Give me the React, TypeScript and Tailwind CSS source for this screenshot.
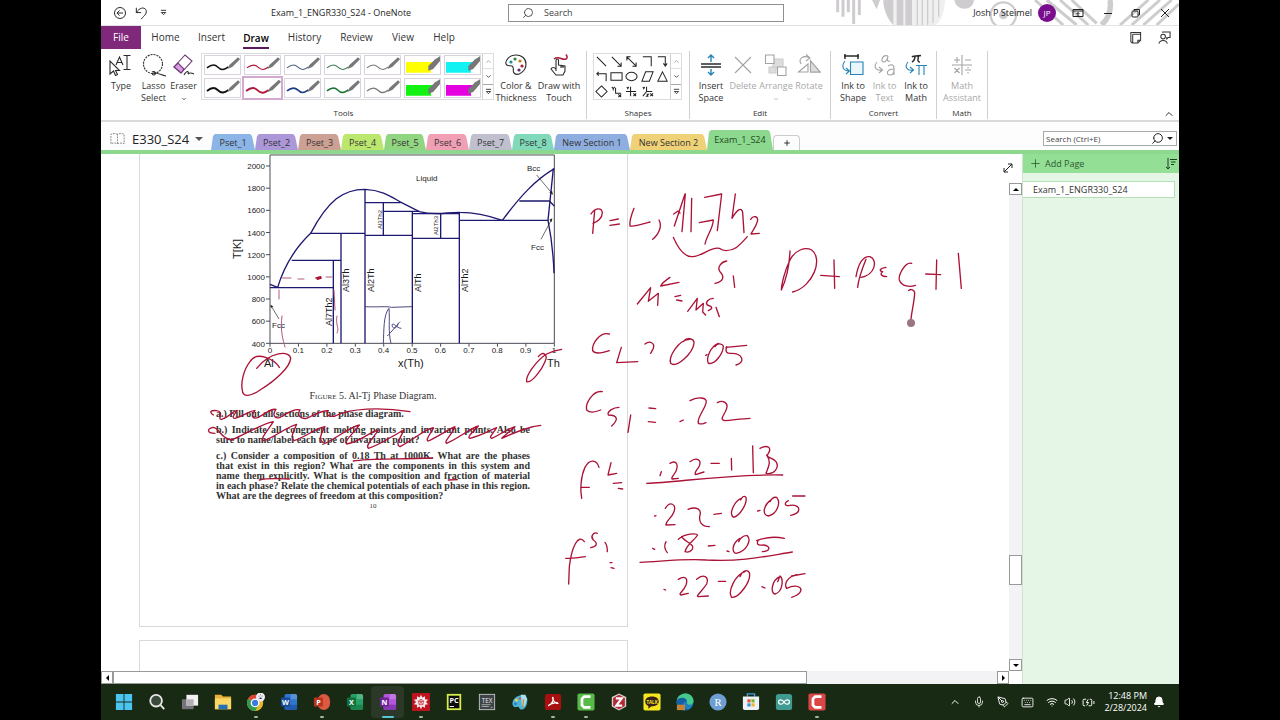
import React from "react";
import {
  BatteryCharging,
  Bell,
  ChevronDown,
  ChevronUp,
  Keyboard,
  Mic,
  PenTool,
  Plus,
  Search,
  Volume2,
  Wifi,
} from "lucide-react";

const UI_FONT = "font-['Open_Sans','Noto_Sans',sans-serif]";

// ---------- Title bar ----------

const TitleArt = () => (
  <svg className="absolute right-0 top-0" width="349" height="25" viewBox="0 0 1047 75" fill="none" stroke="#cfcccf">
    <path d="M23 0V37M39 0V50M55 0V37M71 0V72M88 0V45" strokeWidth="9" />
    <path d="M126 0H150L140 28Z" fill="#cfcccf" stroke="none" />
    <path d="M160 0H345V10C340 40 335 60 318 75H190C170 55 160 25 160 0Z" fill="#f1f0f1" stroke="none" />
    <path d="M160 0H190V75C170 55 160 25 160 0Z" fill="#cfcccf" stroke="none" />
    <path d="M210 0V75M236 0V75" strokeWidth="20" />
    <path d="M262 0V75M277 0V75M293 0V75M309 0V70M326 0V50" strokeWidth="4" />
    <path d="M373 0C378 35 430 35 432 0Z" fill="#cfcccf" stroke="none" />
    <circle cx="520" cy="45" r="38" strokeWidth="7" />
    <circle cx="520" cy="45" r="13" fill="#cfcccf" stroke="none" />
    <path d="M615 0L700 75M650 0L740 75M690 0L775 75M725 0L800 70" strokeWidth="9" />
    <path d="M840 0C845 30 835 55 815 75" strokeWidth="16" />
    <path d="M955 0L870 75M990 0L905 75M1025 0L940 75M1047 12L980 75" strokeWidth="9" />
  </svg>
);

const TitleBar = () => (
  <header className="relative flex h-[26px] items-center border-b border-[#e3e3e3] bg-white text-[9px] text-[#262626]">
    <TitleArt />
    <div className="relative flex w-[407px] items-center">
      <button aria-label="Back" className="ml-3 h-4 w-4">
        <svg viewBox="0 0 16 16" width="14" height="14" fill="none" stroke="#222" strokeWidth="1.1">
          <circle cx="8" cy="8" r="6.3" />
          <path d="M11.5 8H4.5M7.5 5L4.5 8L7.5 11" />
        </svg>
      </button>
      <button aria-label="Undo" className="ml-[6px] h-4 w-4">
        <svg viewBox="0 0 16 16" width="14" height="14" fill="none" stroke="#222" strokeWidth="1.1">
          <path d="M1.5 2V7.5H7M1.5 7.5C5 2 10 1 12.3 4C14.5 8 11 10.5 7 15" />
        </svg>
      </button>
      <button aria-label="Customize toolbar" className="ml-[9px] h-4 w-2">
        <svg viewBox="0 0 8 8" width="7" height="7" fill="none" stroke="#222">
          <path d="M1 1.5H7M1.5 4L4 6.5L6.5 4Z" />
        </svg>
      </button>
      <h1 className="ml-[103px] whitespace-nowrap text-[9px]">Exam_1_ENGR330_S24 - OneNote</h1>
    </div>
    <label className="relative flex h-[18px] w-[276px] shrink-0 items-center border border-[#8f8f8f] bg-white">
      <Search className="ml-[13px] h-3 w-3 shrink-0 -scale-x-100 text-[#444]" strokeWidth={1.8} />
      <input type="text" placeholder="Search" className="ml-[10px] w-full text-[9px] outline-none placeholder:text-[#444]" />
    </label>
    <div className="relative flex flex-1 items-center justify-end">
      <span className="whitespace-nowrap">Josh P Steimel</span>
      <span className="ml-[6px] flex h-[18px] w-[18px] items-center justify-center rounded-full bg-[#7a0d8e] text-[8px] text-white">
        JP
      </span>
      <button aria-label="Ribbon display options" className="ml-4 h-3 w-3">
        <svg viewBox="0 0 12 12" width="12" height="12" fill="none" stroke="#222">
          <path d="M1 2.500H11V9.500H1ZM1 4H11M6 9V5.500M4.500 7L6 5.500L7.500 7" />
        </svg>
      </button>
      <button aria-label="Minimize" className="ml-[18px] h-3 w-3">
        <svg viewBox="0 0 12 12" width="12" height="12" stroke="#222"><path d="M2 6.500H10" /></svg>
      </button>
      <button aria-label="Restore" className="ml-4 h-3 w-3">
        <svg viewBox="0 0 12 12" width="12" height="12" fill="none" stroke="#222">
          <rect x="2" y="4" width="6" height="6" rx="1" />
          <path d="M4 4V2.500H9.500V8H8" />
        </svg>
      </button>
      <button aria-label="Close" className="ml-[17px] mr-2 h-3 w-3">
        <svg viewBox="0 0 12 12" width="12" height="12" stroke="#222"><path d="M2 2L10 10M10 2L2 10" /></svg>
      </button>
    </div>
  </header>
);

// ---------- Menu ----------

const menuItems = [
  { label: "Home", cls: "w-[49px]" },
  { label: "Insert", cls: "w-[43px]" },
  { label: "Draw", cls: "w-[46px]", active: true },
  { label: "History", cls: "w-[51px]" },
  { label: "Review", cls: "w-[53px]" },
  { label: "View", cls: "w-[40px]" },
  { label: "Help", cls: "w-[42px]" },
];

const MenuBar = () => (
  <nav className="flex h-[23px] items-center bg-white text-[10px] text-[#333]">
    <button className="h-full w-10 bg-[#80297b] text-white">File</button>
    {menuItems.map((item) => (
      <button key={item.label} className={`flex h-full items-center justify-center pb-px ${item.cls}`}>
        <span
          className={
            item.active ? "mt-[3px] border-b-2 border-[#5b1a5c] font-semibold leading-[18px] text-black" : "leading-5"
          }
        >
          {item.label}
        </span>
      </button>
    ))}
    <div className="ml-auto mr-2 flex gap-4">
      <button aria-label="Feed">
        <svg viewBox="0 0 14 14" width="13" height="13" fill="none" stroke="#333" strokeWidth="1.1">
          <path d="M2 1.500H12.500V10L9.500 13H3.500L2 11.500ZM4 3.500H12.500M4 3.500V12.500M9.500 13V10H12.500" />
        </svg>
      </button>
      <button aria-label="Share feedback">
        <svg viewBox="0 0 14 14" width="13" height="13" fill="none" stroke="#333" strokeWidth="1.1">
          <circle cx="5.500" cy="6" r="2.500" />
          <path d="M1 13.500C2 9 9 9 10 13.500M5 2V1H13V7H11L9.500 8.500V6.500" />
        </svg>
      </button>
    </div>
  </nav>
);

// ---------- Ribbon ----------

type RibbonButtonProps = {
  lines: string[];
  width: string;
  disabled?: boolean;
  drop?: boolean;
  children: React.ReactNode;
};

const RibbonButton = ({ lines, width, disabled, drop, children }: RibbonButtonProps) => (
  <button
    disabled={disabled}
    className={`flex shrink-0 flex-col items-center ${width} ${disabled ? "text-[#a8a8a8]" : "text-[#333]"}`}
  >
    <svg
      className="mb-[3px]"
      viewBox="0 0 24 24"
      width="24"
      height="24"
      fill="none"
      stroke={disabled ? "#a3a3a3" : "#2b2b2b"}
      strokeWidth="1.1"
    >
      {children}
    </svg>
    {lines.map((line) => (
      <span key={line} className="block whitespace-nowrap text-[9px] leading-3">
        {line}
      </span>
    ))}
    {drop && <ChevronDown className="mt-1 h-[6px] w-[6px]" strokeWidth={3} />}
  </button>
);

const RibbonGroup = ({ label, width, children }: { label: string; width: string; children: React.ReactNode }) => (
  <section className={`flex h-[68px] shrink-0 flex-col border-r border-[#d0d0d0] ${width}`}>
    <div className="flex flex-1 items-start pt-[2px]">{children}</div>
    <h2 className="text-center text-[8px] leading-3 text-[#333]">{label}</h2>
  </section>
);

const pens = [
  { color: "#111111", w: 1.6 },
  { color: "#b0193c", w: 1.2 },
  { color: "#4a5f80", w: 1.1 },
  { color: "#3d7a55", w: 1.1 },
  { color: "#777777", w: 1.1 },
  { color: "#ffff00", marker: true },
  { color: "#12f2f2", marker: true },
  { color: "#111111", w: 2 },
  { color: "#b0193c", w: 1.8, selected: true },
  { color: "#1c3a80", w: 1.7 },
  { color: "#157030", w: 1.6 },
  { color: "#777777", w: 1.3 },
  { color: "#12f212", marker: true },
  { color: "#e500e0", marker: true },
];

const GalleryScroll = () => (
  <div className="flex w-[11px] flex-col border-l border-[#d0d0d0] text-[#444]">
    <button aria-label="Row up" className="flex flex-1 items-center justify-center border-b border-[#e0e0e0]">
      <ChevronUp className="h-[7px] w-[7px] opacity-50" strokeWidth={3} />
    </button>
    <button aria-label="Row down" className="flex flex-1 items-center justify-center border-b border-[#aaa]">
      <ChevronDown className="h-[7px] w-[7px]" strokeWidth={3} />
    </button>
    <button aria-label="More" className="flex flex-1 items-center justify-center">
      <svg viewBox="0 0 8 8" width="7" height="7" fill="none" stroke="#333">
        <path d="M1 1.500H7M1.500 4L4 6.500L6.500 4Z" />
      </svg>
    </button>
  </div>
);

const PenGallery = () => (
  <div className="flex h-[47px] shrink-0 border border-[#dcdcdc]">
    <div className="grid grid-cols-[repeat(7,40px)] grid-rows-2 place-items-center">
      {pens.map((pen, i) => (
        <button
          key={i}
          aria-label={pen.marker ? "Highlighter" : "Pen"}
          className={`h-5 w-[37px] bg-white ${pen.selected ? "outline-2 outline-[#d3a9cf]" : "border border-[#d8d3dc]"}`}
        >
          <svg viewBox="0 0 36 18" className="h-full w-full" fill="none">
            {pen.marker ? (
              <>
                <path d="M1 6H29L26 11L27 17H1Z" fill={pen.color} />
                <path d="M24 15L24 10L31 3L36 0V5L29 13Z" fill="#777" />
              </>
            ) : (
              <>
                <path d="M2 12C7 8 10 8 13 11C17 15 20 14 24 11" stroke={pen.color} strokeWidth={pen.w} />
                <path d="M23 13L25 9L34 1L36 3L28 11Z" fill="#777" />
              </>
            )}
          </svg>
        </button>
      ))}
    </div>
    <GalleryScroll />
  </div>
);

// each glyph sits in a 12x12 cell
const shapeGlyphs = [
  "M1 1L11 11",
  "M1 1L11 11M11 7V11H7",
  "M1 1L11 11M11 7V11H7M1 5V1H5",
  "M1 1H10V11",
  "M1 1H9V11M7 8L9 11L11 8",
  "M11 11V3H1M3 1L1 3L3 5",
  "M0 2H12V10H0Z",
  "M0 6A6 4.500 0 1 0 12 6A6 4.500 0 1 0 0 6",
  "M4 1H12L8 11H0Z",
  "M6 1L11 11H1Z",
  "M6 0L12 6L6 12L0 6Z",
  "M5 2V8H11M1 1L2.500 3L4 1M2.500 3V5M8 9L11 12M11 9L8 12",
  "M5 1V11M0 6H11M1 1L2 3L3 1M8 8L11 11M11 8L8 11",
  "M5 1V6H11M5 6L1 11M1 1L2 3L3 1M5 9H7L5 11H7M9 8L12 11M12 8L9 11",
];

const ShapeGallery = () => (
  <div className="ml-[6px] flex h-[47px] border border-[#dcdcdc]">
    <div className="grid w-[76px] grid-cols-5 place-items-center">
      {shapeGlyphs.map((d, i) => (
        <button key={i} aria-label={`Shape ${i + 1}`}>
          <svg viewBox="-1 -1 14 14" width="13" height="13" fill="none" stroke="#222" strokeWidth="1.1">
            <path d={d} />
          </svg>
        </button>
      ))}
    </div>
    <GalleryScroll />
  </div>
);

const Ribbon = () => (
  <div className="relative flex h-[73px] items-start border-b-2 border-[#dadada] bg-white pt-[2px]">
    <RibbonGroup label="Tools" width="w-[486px]">
      <RibbonButton lines={["Type"]} width="w-[40px]">
        <path d="M1 8V21L4.500 18L6.500 22.500L8.500 21.500L6.500 17.500H10.500Z" />
        <path d="M7 12L10.500 4L14 12M8.500 9.500H12.500M14.500 2.500H21.500M14.500 16.500H21.500M18 2.500V16.500" />
      </RibbonButton>
      <RibbonButton lines={["Lasso", "Select"]} width="w-[25px]">
        <circle cx="11" cy="11" r="9.500" strokeDasharray="2 1" />
        <path d="M10 19C13 17 15 21 12 22C9 22 11 19 14 20C18 21 20 22 24 23" />
      </RibbonButton>
      <RibbonButton lines={["Eraser"]} width="w-[35px]" drop>
        <path d="M2 14L13 2L20 8L9 20Z" stroke="#6c3a78" />
        <path d="M2 14L6 10L12 16L9 20Z" fill="#d99be0" stroke="#6c3a78" />
        <path d="M12 22C15 17 17 18 16 21C18 19 20 20 22 21" />
      </RibbonButton>
      <PenGallery />
      <RibbonButton lines={["Color &", "Thickness"]} width="w-[44px]">
        <path d="M12 2C5 2 1 8 2 11C3 14 6 12 8 13C11 15 8 18 10 20C14 24 22 18 22 11C22 5 17 2 12 2Z" />
        <g stroke="none">
          <circle cx="7" cy="9" r="1.600" fill="#1c8c9c" />
          <circle cx="11" cy="6" r="1.600" fill="#377b42" />
          <circle cx="16" cy="8" r="1.600" fill="#c57b22" />
          <circle cx="18" cy="13" r="1.600" fill="#b0193c" />
          <circle cx="15" cy="17" r="1.600" fill="#5a2a7a" />
        </g>
      </RibbonButton>
      <RibbonButton lines={["Draw with", "Touch"]} width="w-[42px]">
        <path d="M9 18V7.500C9 5.500 11.500 5.500 11.500 7.500V12L18 13V18L16 22H9L4 16C5 14 7 14 9 16M14 12.500V15M16 13V15" />
        <path d="M7 6C12 2 15 8 19 6C21 5 20 3 19 1.500" stroke="#b0193c" strokeWidth="1.500" />
      </RibbonButton>
    </RibbonGroup>
    <RibbonGroup label="Shapes" width="w-[103px]">
      <ShapeGallery />
    </RibbonGroup>
    <RibbonGroup label="Edit" width="w-[141px]">
      <div className="w-[5px]" />
      <RibbonButton lines={["Insert", "Space"]} width="w-[32px]">
        <path d="M2 11H22M2 14H22" strokeWidth="1.500" />
        <path d="M12 9V2M9 5L12 2L15 5M12 16V22M9 19L12 22L15 19" stroke="#2484b5" strokeWidth="1.400" />
      </RibbonButton>
      <RibbonButton lines={["Delete"]} width="w-[32px]" disabled>
        <path d="M4 4L20 20M20 4L4 20" />
      </RibbonButton>
      <RibbonButton lines={["Arrange"]} width="w-[34px]" disabled drop>
        <path d="M9 6H19V15H9Z" fill="#ddd" stroke="#ccc" />
        <path d="M5 14H12V20H5Z" fill="#ddd" stroke="#ccc" />
        <path d="M1.500 2H10V10.500H1.500ZM13.500 14H22V22.500H13.500Z" fill="#fff" />
      </RibbonButton>
      <RibbonButton lines={["Rotate"]} width="w-[32px]" disabled drop>
        <path d="M1.500 19H11V11ZM13.500 19V8L23 19Z" />
        <path d="M13.500 19V8L23 19Z" fill="#ddd" />
        <path d="M4 11C1 6 6 2 12 4.500M9 1.500L13 5L9 8" />
      </RibbonButton>
    </RibbonGroup>
    <RibbonGroup label="Convert" width="w-[106px]">
      <div className="w-[6px]" />
      <RibbonButton lines={["Ink to", "Shape"]} width="w-[32px]">
        <path d="M3 3H18M4 1V6M17 1V6" strokeWidth="1.500" />
        <path d="M9.500 9H22V21.500H9.500Z" stroke="#2484b5" fill="#eaf6fc" />
        <path d="M4 8C0 13 2 18 8 18M5 15L8.500 18L5 21" stroke="#2484b5" />
      </RibbonButton>
      <RibbonButton lines={["Ink to", "Text"]} width="w-[31px]" disabled>
        <path d="M15 3C9 1 7 9 11 9C13 9 15 5 15 3C14 6 14 9 17 8" />
        <path d="M15 13C20 10 21 13 21 16V22M21 16C13 16 13 22 17 22C20 22 21 19 21 17M4 9C0 14 3 18 9 17M6 14L9.500 17L6 20" />
      </RibbonButton>
      <RibbonButton lines={["Ink to", "Math"]} width="w-[32px]">
        <path d="M8 4C10 2 14 3 17 2.500M11 3C11 6 10 8 8 9M14.500 3C14 6 13 9 16 9" strokeWidth="1.500" />
        <path d="M12 12.500H23M15 12.500V22M20 12.500V22M4 9C0 14 3 18 9 17M6 14L9.500 17L6 20" stroke="#2484b5" />
      </RibbonButton>
    </RibbonGroup>
    <RibbonGroup label="Math" width="w-[51px]">
      <RibbonButton lines={["Math", "Assistant"]} width="w-[50px]" disabled>
        <path d="M12 2V22M2 12H22M4 7H10M7 4V10M15 7H21M4.500 15L9.500 20M9.500 15L4.500 20M15 17H21M18 14V15.500M18 19V20.500" />
      </RibbonButton>
    </RibbonGroup>
    <button aria-label="Collapse the ribbon" className="ml-auto mr-1 self-end">
      <ChevronUp className="h-3 w-3 text-[#333]" />
    </button>
  </div>
);

// ---------- Section tabs ----------

const sections = [
  { label: "Pset_1", cls: "w-[44px] bg-[#8ab5e6]" },
  { label: "Pset_2", cls: "w-[43px] bg-[#ac97d9]" },
  { label: "Pset_3", cls: "w-[43px] bg-[#cca093]" },
  { label: "Pset_4", cls: "w-[43px] bg-[#bce76f]" },
  { label: "Pset_5", cls: "w-[42px] bg-[#92d581]" },
  { label: "Pset_6", cls: "w-[43px] bg-[#f09fb4]" },
  { label: "Pset_7", cls: "w-[43px] bg-[#c0bfcd]" },
  { label: "Pset_8", cls: "w-[42px] bg-[#80dab9]" },
  { label: "New Section 1", cls: "w-[76px] bg-[#8faee0]" },
  { label: "New Section 2", cls: "w-[77px] bg-[#efd177]" },
];

const TAB_SHAPE =
  "[clip-path:polygon(0_100%,2px_2px,4px_0,calc(100%-5px)_0,calc(100%-3px)_2px,100%_100%)]";

const SectionTabs = () => (
  <div className="flex h-8 items-end border-b-4 border-[#8bd88e] bg-[#fdfdfd] text-[9px] text-[#333]">
    <button className="mb-[3px] ml-2 flex w-[102px] items-center">
      <svg viewBox="0 0 18 14" width="17" height="14" fill="none" stroke="#777" strokeWidth="0.900">
        <path d="M9 2C7 1 4 1 2 2V12C4 11 7 11 9 12C11 11 14 11 16 12V2C14 1 11 1 9 2V12" strokeDasharray="2 1" />
      </svg>
      <span className="ml-[6px] text-[13px] leading-4 text-[#222]">E330_S24</span>
      <span className="ml-[6px] border-x-4 border-t-4 border-x-transparent border-t-[#555]" />
    </button>
    {sections.map((s) => (
      <button key={s.label} className={`h-4 shrink-0 whitespace-nowrap pt-px ${TAB_SHAPE} ${s.cls}`}>
        {s.label}
      </button>
    ))}
    <button className={`h-5 w-[66px] shrink-0 bg-[#8bd88e] text-[#1f4a22] ${TAB_SHAPE}`}>Exam_1_S24</button>
    <button
      aria-label="Create a new section"
      className="flex h-[15px] w-[27px] items-center justify-center rounded-t-[4px] border border-b-0 border-[#ccc]"
    >
      <Plus className="h-2 w-2" strokeWidth={3} />
    </button>
    <label className="mb-1 ml-auto mr-[2px] flex h-[15px] w-[134px] items-center border border-[#aaa] bg-white">
      <input
        type="text"
        placeholder="Search (Ctrl+E)"
        className="w-full min-w-0 pl-[2px] text-[8px] outline-none placeholder:text-[#444]"
      />
      <Search className="h-[13px] w-[13px] shrink-0 -scale-x-100 text-[#222]" strokeWidth={1.8} />
      <span className="mx-[3px] border-x-[3px] border-t-[3px] border-x-transparent border-t-[#222]" />
    </label>
  </div>
);

// ---------- Page canvas ----------

const yTicks = [2000, 1800, 1600, 1400, 1200, 1000, 800, 600, 400];
const xTicks = ["0", "0.1", "0.2", "0.3", "0.4", "0.5", "0.6", "0.7", "0.8", "0.9", "1"];

const compounds = [
  { name: "Al7Th2", x: 332, y: 326, size: 9 },
  { name: "Al3Th", x: 349, y: 292, size: 9 },
  { name: "Al2Th", x: 374, y: 292, size: 9 },
  { name: "AlTh", x: 421, y: 292, size: 9 },
  { name: "AlTh2", x: 468, y: 292, size: 9 },
  { name: "Al3Th2", x: 382, y: 229, size: 6 },
  { name: "Al2Th3", x: 438, y: 235, size: 6 },
];

const PhaseDiagram = () => (
  <svg
    className="block font-['Liberation_Sans',sans-serif]"
    width="486"
    height="220"
    viewBox="140 154 486 220"
    fill="none"
  >
    <g transform="translate(210 150) scale(0.33333)" strokeWidth="4">
      <path d="M180 580V15H1033V580Z" stroke="#4a4a55" strokeWidth="3" />
      <g stroke="#1d1870">
        <path d="M180 403L203 412C225 340 265 285 302 250C355 150 400 118 465 118C520 120 550 145 575 158L628 185C680 198 710 186 750 187C800 187 840 198 877 211C930 140 975 90 1033 56" />
        <path d="M180 413H370M245 331H393M302 250H465M465 158H572M520 184H628M465 256H607M607 191H748M607 265H748M748 211H1015M928 153H1018L1033 168" />
        <path d="M370 331V580M393 250V580M465 118V580M520 158V256M607 184V580M692 191V265M748 187V580" />
        <path d="M1030 56L1014 211C1025 265 1030 310 1032 370" />
      </g>
      <path d="M980 75L1026 130M993 268L1025 208M207 507L183 467" stroke="#222" strokeWidth="2" />
      <path d="M1029 134L1018 128L1026 122ZM1027 205L1018 209L1025 216ZM181 464L190 469L183 474Z" fill="#222" />
      <g stroke="#4a4580" strokeWidth="3">
        <path d="M465 470C500 472 530 468 545 472L606 470M520 580C522 540 520 495 537 475C540 510 534 545 543 580" />
        <path d="M532 558C545 545 565 520 570 515M574 535C560 535 550 515 546 525C548 540 562 535 565 520" />
      </g>
      <path
        d={[...yTicks.map((_, i) => `M168 ${48 + i * 66.5}H180`), ...xTicks.map((_, i) => `M${180 + i * 85.3} 580V590`)].join("")}
        stroke="#4a4a55"
        strokeWidth="3"
      />
    </g>
    <g fill="#1a1a1a" fontSize="8">
      {yTicks.map((t, i) => (
        <text key={t} x="265" y={169 + i * 22.2} textAnchor="end">
          {t}
        </text>
      ))}
      {xTicks.map((t, i) => (
        <text key={t} x={270 + i * 28.4} y="353" textAnchor="middle">
          {t}
        </text>
      ))}
      <text x="416" y="181">Liquid</text>
      <text x="527" y="171">Bcc</text>
      <text x="531" y="250">Fcc</text>
      <text x="272" y="328">Fcc</text>
      <g fontSize="11">
        <text x="264" y="367">Al</text>
        <text x="398" y="367">x(Th)</text>
        <text x="547" y="367">Th</text>
        <text transform="translate(241 259) rotate(-90)">T[K]</text>
      </g>
      {compounds.map((c) => (
        <text key={c.name} fontSize={c.size} transform={`translate(${c.x} ${c.y}) rotate(-90)`}>
          {c.name}
        </text>
      ))}
    </g>
  </svg>
);

// Ink strokes, stored at three units per pixel from each group's origin
const inkGroups = [
  {
    x: 210,
    y: 150,
    strokes: [
      "M208 652C195 630 140 600 120 635C100 660 92 700 97 720C97 745 125 738 150 720C200 690 240 650 242 625C240 600 180 605 140 655",
      "M985 620C1000 600 1015 615 1005 635C995 660 965 700 950 695C945 680 980 630 1010 612C1025 604 1040 600 1055 598",
      "M318 384L332 380L322 388L334 384",
    ],
  },
  {
    x: 200,
    y: 380,
    strokes: [
      "M40 105C25 95 35 90 50 92C75 95 50 120 65 118C90 110 100 90 112 92C100 105 95 115 105 115C140 105 150 90 165 92C150 110 160 118 175 112C205 95 215 85 228 88C215 105 225 118 240 112C270 95 285 85 300 90C290 105 300 118 320 115C350 100 370 90 385 92C375 105 390 112 405 108C450 85 540 80 630 95",
      "M45 160C20 160 20 145 40 142C60 145 60 175 95 180C130 165 190 130 220 125C205 150 180 175 190 182C220 175 260 140 290 133C280 155 270 175 282 182C320 170 345 145 375 140C360 165 355 185 375 190C410 175 450 140 478 135C460 160 430 185 440 192C480 185 510 155 535 150C520 175 495 195 505 205C540 195 590 160 612 150C600 175 585 195 600 200C640 180 670 150 700 143C690 165 675 180 685 183C715 170 750 145 765 140C755 165 730 185 740 190C775 175 810 145 835 138C815 160 800 172 810 175C850 165 870 150 890 143C880 160 865 172 875 175C900 165 915 150 945 140C925 160 905 172 905 175C950 155 985 140 1022 136",
      "M460 243C500 236 580 238 698 234",
      "M178 300C200 294 230 296 268 297M745 300L772 299",
    ],
  },
  {
    x: 560,
    y: 180,
    strokes: [
      "M104 92L98 160M93 102C105 82 125 82 127 98C127 114 112 126 99 130M150 122L175 117M150 136L178 132",
      "M222 85C214 105 208 125 210 138C225 140 250 132 270 126M297 120C306 135 300 160 278 178",
      "M375 42L343 138M376 42L366 155M341 102L354 93L360 99M395 55L393 155M434 52L485 42L472 152",
      "M418 128L460 120C458 150 440 165 435 192M526 42L516 115C530 90 545 78 548 98L552 158",
      "M572 118C580 105 597 108 592 125C588 142 575 155 573 162L598 160",
      "M340 172C352 200 372 232 398 230C430 228 450 200 478 205C490 214 510 214 530 202C545 190 555 178 562 170",
      "M500 243C485 245 470 262 480 275C495 290 490 305 465 310M520 288L524 322M330 292C318 300 305 312 302 318L357 307",
      "M232 372L272 323L265 364L295 340L293 376M345 350L362 346M350 360L366 363",
      "M383 394L412 355L408 390L430 370L428 396L437 405M460 355C445 355 435 368 442 375C458 380 460 385 445 392M468 382L478 410",
      "M148 462C120 455 95 490 98 512C105 524 130 518 148 512M184 502L170 548L233 545M255 492C270 480 285 490 280 505L272 520",
      "M388 478C355 480 325 530 332 550C350 565 398 520 402 490C403 475 380 470 370 485M437 526L441 524",
      "M475 490C450 500 438 535 445 550C465 555 490 520 490 498C485 488 470 490 465 500M500 500C495 515 500 522 515 520C545 520 560 545 528 555M498 502L560 496",
      "M690 213C688 260 678 300 664 330C665 310 675 270 690 240C705 210 735 200 755 210C790 235 760 320 698 336M822 240L824 325M782 286L838 290",
      "M918 238C905 270 895 300 893 322M888 290C895 250 910 228 930 230C955 240 945 285 903 292M978 262C960 265 955 272 968 275C958 282 965 290 980 290",
      "M1055 250C1035 245 1015 285 1018 300C1025 320 1050 322 1066 316M1130 240L1128 328M1097 282L1142 284M1195 220L1204 325",
      "M1046 332C1050 325 1065 330 1064 340C1062 370 1055 395 1053 418",
    ],
  },
  {
    x: 550,
    y: 380,
    strokes: [
      "M157 35C130 30 105 70 110 90C120 100 140 95 152 90M207 82C190 82 170 95 175 105C205 105 205 120 185 138M242 105L234 157M297 84L317 86M295 125L316 127",
      "M390 125L400 120M420 62C440 50 475 50 468 70C460 95 440 115 445 130C455 135 460 130 468 128M502 68C520 58 535 70 530 85C525 105 505 118 525 122C550 120 575 116 600 115",
      "M147 262C140 240 120 235 105 262C92 290 90 330 95 355M92 322L118 322M183 248L174 285L200 280M190 310L215 308M205 325L218 327",
      "M330 287L334 275M360 250C375 240 385 250 380 268C375 285 362 290 366 297L385 295M420 245C440 230 455 240 448 258C440 272 432 278 436 284L462 276",
      "M483 250L508 250M544 235L545 270M608 198L610 278M630 205C655 192 665 205 655 220C645 235 665 230 678 245C690 265 670 285 648 280C655 262 665 245 650 225",
      "M290 310C380 308 520 282 698 285",
      "M314 408L318 407M346 385C360 362 380 372 372 395C365 415 345 425 348 435L375 434M414 388C440 378 455 388 450 405C445 425 455 440 478 440M492 403L514 400",
      "M575 355C555 360 535 400 550 412C570 408 592 370 588 352C582 345 575 352 572 360M623 393L630 391M665 358C640 375 635 405 655 408C685 400 692 365 680 352C670 350 665 355 660 365",
      "M715 362C700 370 705 380 720 376C755 372 755 400 722 406M728 348L765 348",
      "M103 485C85 460 65 500 58 560L56 612M47 535C70 535 90 533 106 530M142 460C130 455 120 470 130 480C145 490 140 500 122 503M165 487C172 495 172 505 172 515M180 548L186 548M183 563L192 565",
      "M308 505L314 508M348 485C340 500 345 510 352 518M385 478C405 458 440 460 443 465C430 485 412 490 405 515C420 520 435 505 425 495C415 485 400 480 395 470M475 498L495 496M531 513L537 515",
      "M570 475C545 490 545 518 558 520C590 515 605 480 592 467C580 465 570 475 566 485M625 480C620 490 620 498 640 495C665 498 660 515 637 515M620 482C650 470 680 470 703 475",
      "M270 547C330 545 400 535 470 540C580 545 640 530 727 516",
      "M342 628L347 630M385 598C405 585 415 595 408 615C400 635 385 640 392 645L415 640M440 598C460 580 478 590 470 612C455 635 435 650 445 650L475 648M505 604L527 604",
      "M585 575C555 585 532 635 545 652C565 655 605 605 598 578C590 565 575 575 570 590M636 620L645 624M690 590C665 600 660 640 675 642C700 635 700 595 690 588L683 605",
      "M740 584C715 590 700 610 710 625C750 605 775 635 725 652M725 588L765 581",
    ],
  },
];

const InkLayer = () => (
  <svg
    className="pointer-events-none absolute left-0 top-0"
    width="908"
    height="517"
    viewBox="101 154 908 517"
    fill="none"
    strokeLinecap="round"
    strokeLinejoin="round"
  >
    {inkGroups.map((g, i) => (
      <g key={i} transform={`translate(${g.x} ${g.y}) scale(0.33333)`} stroke="#ab1236" strokeWidth="4">
        {g.strokes.map((d) => (
          <path key={d} d={d} />
        ))}
      </g>
    ))}
    <g stroke="#b5587a" strokeWidth="1">
      <path d="M282 278H291M298 279H304M326 277H332M279 290V299M282 316C280 330 283 340 285 347M334 290L335 310M337 316C335 325 340 328 337 333" />
    </g>
    <circle cx="911" cy="323" r="4" fill="#9a7584" />
  </svg>
);

const JUSTIFIED = "block whitespace-nowrap [text-align-last:justify]";

const PageText = () => (
  <div className="ml-[76px] w-[314px] font-['Liberation_Serif',serif] text-[10px] font-bold leading-[10px] text-[#333]">
    <p className="mt-[17px] text-center font-normal">
      <span className="[font-variant-caps:small-caps]">Figure</span> 5. Al-Tj Phase Diagram.
    </p>
    <p className="mt-2">a.) Fill out all sections of the phase diagram.</p>
    <p className="mt-[6px]">
      <span className={JUSTIFIED}>b.) Indicate all congruent melting points and invariant points. Also be</span>
      sure to name/label each type of invariant point?
    </p>
    <p className="mt-[6px]">
      <span className={JUSTIFIED}>c.) Consider a composition of 0.18 Th at 1000K. What are the phases</span>
      <span className={JUSTIFIED}>that exist in this region? What are the components in this system and</span>
      <span className={JUSTIFIED}>name them explicitly. What is the composition and fraction of material</span>
      <span className={JUSTIFIED}>in each phase? Relate the chemical potentials of each phase in this region.</span>
      What are the degrees of freedom at this composition?
    </p>
    <p className="text-center text-[7px] font-normal">10</p>
  </div>
);

const ARROW_BUTTON = "flex shrink-0 items-center justify-center border border-[#999] bg-white";

const NotebookCanvas = () => (
  <main className="flex min-w-0 flex-1 flex-col bg-white">
    <div className="relative flex min-h-0 flex-1">
      <div className="relative min-w-0 flex-1 overflow-hidden">
        <article className="ml-[38px] h-[473px] w-[489px] border-x border-b border-[#d9d9d9]">
          <PhaseDiagram />
          <PageText />
        </article>
        <div className="ml-[38px] mt-[13px] h-[31px] w-[489px] border-x border-t border-[#d9d9d9]" />
        <InkLayer />
      </div>
      <div className="mt-[29px] flex w-[13px] flex-col bg-[#f3f3f5]">
        <button aria-label="Scroll up" className={`h-3 ${ARROW_BUTTON}`}>
          <span className="border-x-[3px] border-b-[3px] border-x-transparent border-b-black" />
        </button>
        <div className="flex-1" />
        <div className="h-[30px] border border-[#999] bg-white" />
        <div className="h-[74px]" />
        <button aria-label="Scroll down" className={`h-3 ${ARROW_BUTTON}`}>
          <span className="border-x-[3px] border-t-[3px] border-x-transparent border-t-black" />
        </button>
      </div>
      <button aria-label="Full page view" className="absolute right-2 top-2">
        <svg viewBox="0 0 12 12" width="12" height="12" fill="none" stroke="#222">
          <path d="M2 10L10 2M6 2H10V6M2 6V10H6" />
        </svg>
      </button>
    </div>
    <div className="mr-[13px] flex h-[13px] bg-[#f3f3f5]">
      <button aria-label="Scroll left" className={`w-3 ${ARROW_BUTTON}`}>
        <span className="border-y-[3px] border-r-[3px] border-y-transparent border-r-black" />
      </button>
      <div className="w-[694px] border border-[#999] bg-white" />
      <div className="flex-1" />
      <button aria-label="Scroll right" className={`w-3 ${ARROW_BUTTON}`}>
        <span className="border-y-[3px] border-l-[3px] border-y-transparent border-l-black" />
      </button>
    </div>
  </main>
);

const PageList = () => (
  <aside className="w-[157px] shrink-0 border-l border-[#cfe3d0] bg-[#e6f6e6] text-[9px] text-[#333]">
    <div className="flex h-[19px] items-center bg-[#93df96] pl-[6px] pr-[2px]">
      <button className="flex items-center text-[#2d5a30]">
        <Plus className="mr-[3px] h-[13px] w-[13px]" strokeWidth={1.5} />
        Add Page
      </button>
      <button aria-label="Sort pages" className="ml-auto">
        <svg viewBox="0 0 12 12" width="12" height="12" fill="none" stroke="#1f3d20">
          <path d="M3 0V11M1 9L3 11L5 9M5 1.500H12M6 4H10.500M6 6.500H9" />
        </svg>
      </button>
    </div>
    <button className="mr-1 mt-2 block h-[17px] w-[152px] border border-l-0 border-[#b5dfb6] bg-white pl-[10px] text-left">
      Exam_1_ENGR330_S24
    </button>
  </aside>
);

// ---------- Taskbar ----------

const LetterBadge = ({ letter, fill, dark, round }: { letter: string; fill: string; dark: string; round?: boolean }) => (
  <>
    <rect x="5" y="1" width="14" height="18" rx={round ? 8 : 2} fill={fill} />
    <path d="M12 1H17A2 2 0 0 1 19 3V7H12Z" fill="#fff" opacity={round ? 0 : 0.2} />
    <path d="M5 13H19V17A2 2 0 0 1 17 19H7A2 2 0 0 1 5 17Z" fill={dark} opacity={round ? 0 : 0.6} />
    <rect x="1" y="5" width="10" height="10" rx="1" fill={dark} />
    <text x="6" y="13" textAnchor="middle" fontSize="8" fontWeight="bold" fill="#fff">
      {letter}
    </text>
  </>
);

const apps: { name: string; running?: boolean; active?: boolean; icon: React.ReactNode }[] = [
  {
    name: "Start",
    icon: <path d="M1 1H9.500V9.500H1ZM10.500 1H19V9.500H10.500ZM1 10.500H9.500V19H1ZM10.500 10.500H19V19H10.500Z" fill="#4cc4f2" />,
  },
  {
    name: "Search",
    icon: (
      <g fill="none" stroke="#e8e8e8" strokeWidth="2">
        <circle cx="9" cy="8.500" r="6.500" fill="#3c4a3c" />
        <path d="M14 13.500L18 18" />
      </g>
    ),
  },
  {
    name: "Task view",
    icon: (
      <>
        <path d="M1 7H14V18H1Z" fill="#77737a" />
        <path d="M6 2H19V14H6Z" fill="#f2f0f2" />
        <path d="M6 7H14V14H6Z" fill="#b3afb3" />
      </>
    ),
  },
  {
    name: "File Explorer",
    icon: (
      <>
        <path d="M1 2H8L10 4H19V18H1Z" fill="#e9b33b" />
        <path d="M1 6H19V18H1Z" fill="#fbd766" />
        <path d="M5 13H15V18H5Z" fill="#2272b5" />
      </>
    ),
  },
  {
    name: "Chrome",
    running: true,
    icon: (
      <>
        <circle cx="9" cy="11" r="9" fill="#e4b92b" />
        <path d="M9 11L1.200 6.500A9 9 0 0 1 17 7H9Z" fill="#dc4437" />
        <path d="M9 11L1.200 6.500A9 9 0 0 0 9 20L13 13Z" fill="#2f9b50" />
        <circle cx="9" cy="11" r="4.200" fill="#3c7be0" stroke="#fff" strokeWidth="1.500" />
        <circle cx="15" cy="4.500" r="5" fill="#f1eff4" />
        <path d="M12.500 3.500H14M16 3.500H17.500M13 6.500L15 5L17 6.500M15 1V2.500" stroke="#8a86b0" />
      </>
    ),
  },
  { name: "Word", icon: <LetterBadge letter="W" fill="#2f77cc" dark="#174a9c" /> },
  { name: "PowerPoint", running: true, icon: <LetterBadge letter="P" fill="#dc5a41" dark="#b8341f" round /> },
  { name: "Excel", icon: <LetterBadge letter="X" fill="#27a065" dark="#12703f" /> },
  { name: "OneNote", running: true, active: true, icon: <LetterBadge letter="N" fill="#b355dd" dark="#6b2496" /> },
  {
    name: "Mathematica",
    running: true,
    icon: (
      <>
        <rect width="20" height="20" rx="1" fill="#c01320" />
        <path
          d="M10 2L11.500 5L14.500 3.500L14.500 7L18 7.500L15.500 10L18 12.500L14.500 13L14.500 16.500L11.500 15L10 18L8.500 15L5.500 16.500L5.500 13L2 12.500L4.500 10L2 7.500L5.500 7L5.500 3.500L8.500 5Z"
          fill="#f6e9e9"
        />
        <path d="M10 7L13 9L12 13H8L7 9ZM10 7V10L13 9M10 10L12 13M10 10L8 13M10 10L7 9" fill="none" stroke="#c01320" strokeWidth="0.700" />
      </>
    ),
  },
  {
    name: "PyCharm",
    icon: (
      <>
        <rect x="2" y="1" width="16" height="18" fill="#d6ee4c" />
        <rect x="4" y="3" width="12" height="14" fill="#0b0b0b" />
        <text x="10" y="11" textAnchor="middle" fontSize="8" fontWeight="bold" fill="#fff">
          PC
        </text>
        <path d="M5 15H10" stroke="#fff" />
      </>
    ),
  },
  {
    name: "TeX editor",
    icon: (
      <>
        <rect x="1.500" y="1.500" width="17" height="17" fill="#3f4449" stroke="#c5c8c9" />
        <text x="10" y="11" textAnchor="middle" fontSize="7" fill="#eee">
          TEX
        </text>
        <path d="M4 13H14M4 15H12M14 16H16" stroke="#aaa" />
      </>
    ),
  },
  {
    name: "Paint",
    icon: (
      <>
        <path d="M9 3C2 5 0 12 3 15C5 17 7 14 9 16C10 19 13 19 15 17C20 12 19 2 12 2Z" fill="#48b6d6" />
        <path d="M11 2H16L18 7L15 15L12 14Z" fill="#a6dff0" />
        <circle cx="6" cy="8" r="1.500" fill="#f5d04c" />
        <circle cx="5" cy="12" r="1.500" fill="#3b6bd1" />
        <circle cx="10" cy="6" r="1.300" fill="#d9554a" />
        <path d="M14 7L13 16" stroke="#d98a3b" strokeWidth="1.500" />
      </>
    ),
  },
  {
    name: "Acrobat",
    running: true,
    icon: (
      <>
        <rect x="1" y="1" width="18" height="18" rx="3" fill="#a80f10" />
        <path
          d="M5 14C9 12 11 8 10 5C9 4 9 8 13 11C17 13 16 10 12 11C8 12 5 13 5 14Z"
          fill="none"
          stroke="#fff"
          strokeWidth="1.300"
        />
      </>
    ),
  },
  {
    name: "Camtasia",
    running: true,
    icon: (
      <>
        <rect x="0.500" y="0.500" width="19" height="19" rx="2" fill="#57b947" />
        <path d="M15 4H8L5.500 6.500V13.500L8 16H15" fill="none" stroke="#fff" strokeWidth="3" />
      </>
    ),
  },
  {
    name: "Zotero",
    icon: (
      <>
        <path d="M10 0.500L18 4.500V15L10 19.500L2 15V4.500Z" fill="#d9d3d3" />
        <path d="M10 2L16.500 5.500V14.500L10 18L3.500 14.500V5.500Z" fill="#b32a35" />
        <path d="M6.500 6H13L7 14H13.500" fill="none" stroke="#fff" strokeWidth="2.500" />
      </>
    ),
  },
  {
    name: "KakaoTalk",
    icon: (
      <>
        <rect x="0.500" y="0.500" width="19" height="19" rx="2" fill="#f6e61f" />
        <path d="M10 4C5 4 2.500 6.500 2.500 9.500C2.500 12 4 13.500 6 14.500L6 17.500L9 15C15 15 17.500 12.500 17.500 9.500C17.500 6.500 15 4 10 4Z" fill="#35201c" />
        <text x="10" y="12" textAnchor="middle" fontSize="5" fontWeight="bold" fill="#f6e61f">
          TALK
        </text>
      </>
    ),
  },
  {
    name: "Edge",
    icon: (
      <>
        <circle cx="10" cy="10" r="9.500" fill="#1d7fc4" />
        <path d="M1 8C3 -2 19 -2 19.500 9C19 14 13 14 12 11C14 6 6 3 1 8Z" fill="#46c98b" />
        <path d="M1 8C6 3 13 6 11.500 10C9 9 7 11 8 15C9 17 12 18 14 18C6 22 -1 15 1 8Z" fill="#155fa5" />
        <path d="M1 13H10V19H1Z" fill="#c78335" />
      </>
    ),
  },
  {
    name: "RStudio",
    icon: (
      <>
        <circle cx="10" cy="10" r="9.500" fill="#6f9fd2" />
        <text x="10" y="14" textAnchor="middle" fontSize="12" fill="#fff" className="font-['Liberation_Serif',serif]">
          R
        </text>
      </>
    ),
  },
  {
    name: "Microsoft Store",
    icon: (
      <>
        <path d="M6 4V1H14V4" fill="none" stroke="#3b9fd8" strokeWidth="1.500" />
        <path d="M1 4H19V17A2 2 0 0 1 17 19H3A2 2 0 0 1 1 17Z" fill="#eef1f5" />
        <path d="M6 7H9.500V10.500H6Z" fill="#e2552d" />
        <path d="M10.500 7H14V10.500H10.500Z" fill="#77b82d" />
        <path d="M6 11.500H9.500V15H6Z" fill="#2b92d6" />
        <path d="M10.500 11.500H14V15H10.500Z" fill="#f2b429" />
      </>
    ),
  },
  {
    name: "Arduino",
    icon: (
      <>
        <rect x="1" y="1" width="18" height="18" rx="3" fill="#3f9a92" />
        <path d="M10 10C8 6.500 4 7 4 10C4 13 8 13.500 10 10C12 6.500 16 7 16 10C16 13 12 13.500 10 10Z" fill="none" stroke="#fff" strokeWidth="1.400" />
      </>
    ),
  },
  {
    name: "Camtasia Recorder",
    running: true,
    icon: (
      <>
        <rect x="0.500" y="0.500" width="19" height="19" rx="2" fill="#dc4545" />
        <path d="M15 4H8L5.500 6.500V13.500L8 16H15" fill="none" stroke="#fff" strokeWidth="3" />
      </>
    ),
  },
];

const Taskbar = () => (
  <footer className="flex h-9 shrink-0 items-center bg-[#182a14] text-[9px] text-white">
    <div className="ml-[6px] flex">
      {apps.map((app) => (
        <button
          key={app.name}
          aria-label={app.name}
          className={`relative flex h-8 w-[33px] items-center justify-center rounded ${app.active ? "bg-[#2b3828]" : ""}`}
        >
          <svg viewBox="0 0 20 20" width="18" height="18">
            {app.icon}
          </svg>
          {app.running && (
            <span
              className={`absolute bottom-0 h-[2px] rounded ${app.active ? "w-3 bg-[#5cc6d8]" : "w-1 bg-[#a8b0a6]"}`}
            />
          )}
        </button>
      ))}
    </div>
    <div className="ml-auto flex items-center">
      <ChevronUp className="h-3 w-3" />
      <Mic className="ml-3 h-3 w-3" strokeWidth={1.6} />
      <PenTool className="ml-3 h-3 w-3" strokeWidth={1.8} />
      <Keyboard className="ml-3 h-[13px] w-[13px]" strokeWidth={1.6} />
      <Wifi className="ml-3 h-3 w-3" strokeWidth={2} />
      <Volume2 className="ml-[6px] h-3 w-3" strokeWidth={1.8} />
      <BatteryCharging className="ml-[6px] h-[13px] w-[13px]" strokeWidth={1.8} />
      <div className="ml-[6px] w-[46px] whitespace-nowrap text-right leading-3">
        <div>12:48 PM</div>
        <div>2/28/2024</div>
      </div>
      <Bell className="ml-[6px] mr-[14px] h-3 w-3 fill-white" />
    </div>
  </footer>
);

const App = () => (
  <div className={`flex min-h-screen bg-black px-[101px] ${UI_FONT}`}>
    <div className="flex min-w-0 flex-1 flex-col overflow-hidden bg-white">
      <TitleBar />
      <MenuBar />
      <Ribbon />
      <SectionTabs />
      <div className="flex flex-1">
        <NotebookCanvas />
        <PageList />
      </div>
      <Taskbar />
    </div>
  </div>
);

export default App;
